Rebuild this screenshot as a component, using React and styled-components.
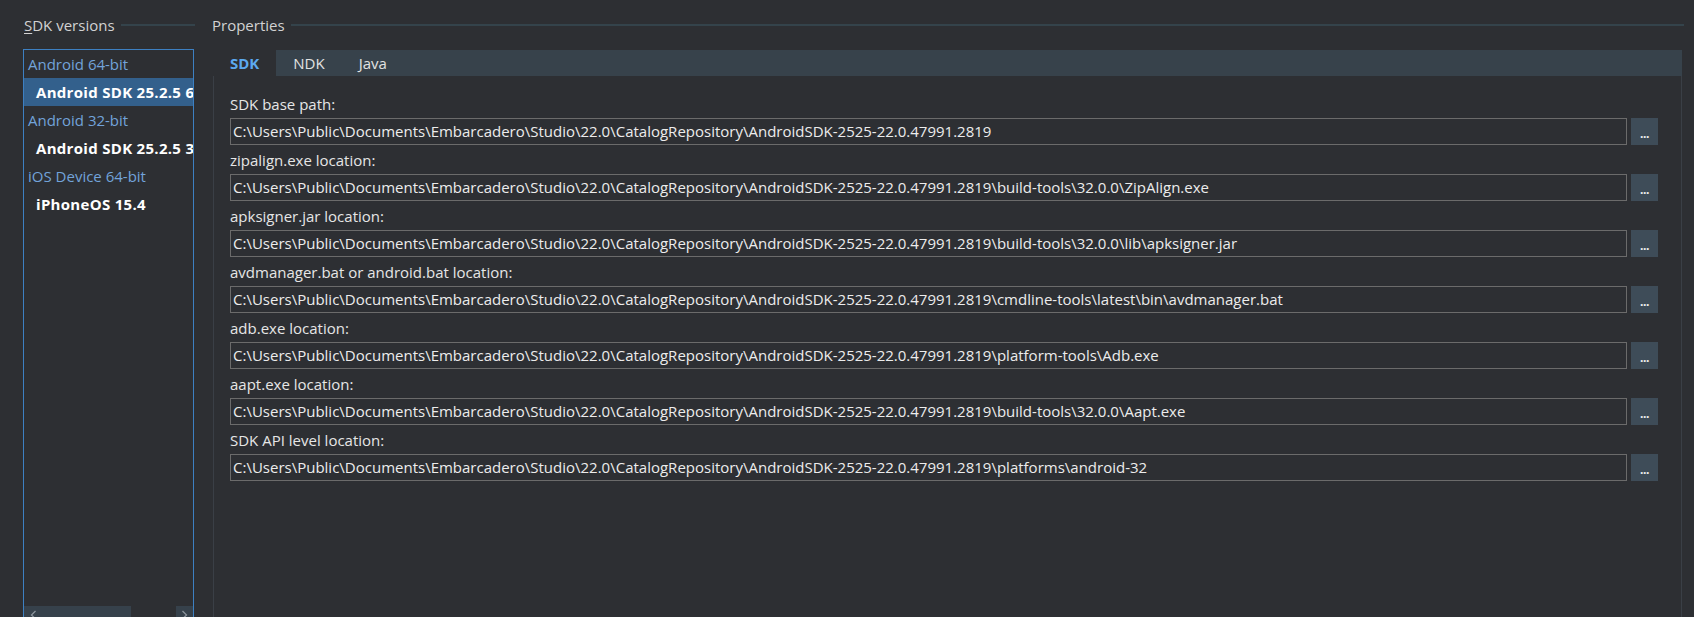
import React, { useState } from 'react'
import styled, { createGlobalStyle } from 'styled-components'

const Global = createGlobalStyle`
  html, body { margin: 0; height: 100%; overflow: hidden; }
  body {
    background: #2d2f33;
    color: #e6e6e6;
    font: 15px "Open Sans", "Noto Sans", sans-serif;
  }
`

const sdkPath = 'C:\\Users\\Public\\Documents\\Embarcadero\\Studio\\22.0\\CatalogRepository\\AndroidSDK-2525-22.0.47991.2819'

const versions = [
  { group: 'Android 64-bit', items: ['Android SDK 25.2.5 64-bit'] },
  { group: 'Android 32-bit', items: ['Android SDK 25.2.5 32-bit'] },
  { group: 'iOS Device 64-bit', items: ['iPhoneOS 15.4'] },
]

const fields = [
  { label: 'SDK base path:', value: sdkPath },
  { label: 'zipalign.exe location:', value: sdkPath + '\\build-tools\\32.0.0\\ZipAlign.exe' },
  { label: 'apksigner.jar location:', value: sdkPath + '\\build-tools\\32.0.0\\lib\\apksigner.jar' },
  { label: 'avdmanager.bat or android.bat location:', value: sdkPath + '\\cmdline-tools\\latest\\bin\\avdmanager.bat' },
  { label: 'adb.exe location:', value: sdkPath + '\\platform-tools\\Adb.exe' },
  { label: 'aapt.exe location:', value: sdkPath + '\\build-tools\\32.0.0\\Aapt.exe' },
  { label: 'SDK API level location:', value: sdkPath + '\\platforms\\android-32' },
]

const tabs = ['SDK', 'NDK', 'Java']

const Page = styled.div`
  display: flex;
  gap: 17px;
  height: 624px;
  box-sizing: border-box;
  padding: 13px 10px 0 23px;
`

const Column = styled.div`
  display: flex;
  flex-direction: column;
  width: ${(p) => (p.$width ? `${p.$width}px` : 'auto')};
  flex: ${(p) => (p.$width ? 'none' : '1')};
  min-width: 0;
`

const GroupTitle = styled.div`
  display: flex;
  align-items: center;
  gap: 6px;
  height: 24px;
  color: #d2d2d2;
  white-space: nowrap;
  padding-left: ${(p) => p.$indent || 0}px;

  u { text-decoration-thickness: 1px; text-underline-offset: 2px; }
`

const TitleLine = styled.div`
  flex: 1;
  height: 2px;
  background: #34434b;
`

const VersionList = styled.div`
  display: flex;
  flex-direction: column;
  width: 171px;
  flex: 1;
  margin-top: 12px;
  box-sizing: border-box;
  border: 1px solid #3d80c2;
  overflow: hidden;
`

const ListRows = styled.div`
  flex: 1;
  overflow: hidden;
`

const ListRow = styled.div`
  height: 28px;
  line-height: 28px;
  white-space: nowrap;
  overflow: hidden;
  padding-left: ${(p) => (p.$group ? 4 : 12)}px;
  color: ${(p) => (p.$group ? '#72a3da' : '#ffffff')};
  font-weight: ${(p) => (p.$group ? 400 : 700)};
  letter-spacing: ${(p) => (p.$group ? 0 : 0.3)}px;
  background: ${(p) => (p.$selected ? '#33608c' : 'transparent')};
`

const HScroll = styled.div`
  display: flex;
  height: 17px;
  flex: none;
`

const ScrollPart = styled.div`
  display: flex;
  align-items: center;
  justify-content: ${(p) => (p.$end ? 'center' : 'flex-start')};
  width: ${(p) => p.$width}px;
  padding-left: ${(p) => (p.$end ? 0 : 6)}px;
  box-sizing: border-box;
  background: #36414b;
  margin-left: ${(p) => (p.$push ? 'auto' : '0')};
`

const Panel = styled.div`
  display: flex;
  flex-direction: column;
  flex: 1;
  margin: 13px 2px 0 1px;
`

const TabBar = styled.div`
  display: flex;
  height: 26px;
  background: #37424b;
  flex: none;
`

const Tab = styled.div`
  padding: 0 17px;
  line-height: 26px;
  background: ${(p) => (p.$active ? '#2d2f33' : 'transparent')};
  color: ${(p) => (p.$active ? '#5ca9ef' : '#e2e2e2')};
  font-weight: ${(p) => (p.$active ? 700 : 400)};
  cursor: default;
`

const PanelBody = styled.div`
  flex: 1;
  border-left: 1px solid #3a3f46;
  border-right: 1px solid #3a3f46;
  padding: 13px 23px 0 16px;
`

const FieldLabel = styled.div`
  height: 29px;
  line-height: 30px;
  color: #e6e6e6;
  white-space: nowrap;
`

const InputRow = styled.div`
  display: flex;
  gap: 4px;
  height: 27px;
`

const PathBox = styled.div`
  flex: 1;
  min-width: 0;
  box-sizing: border-box;
  border: 1px solid #6b6b6b;
  padding: 0 2px;
  line-height: 25px;
  white-space: nowrap;
  overflow: hidden;
  color: #ececec;
`

const BrowseButton = styled.div`
  display: flex;
  align-items: flex-end;
  justify-content: center;
  width: 27px;
  height: 27px;
  box-sizing: border-box;
  padding-bottom: 6px;
  background: #3e4c58;
  color: #f0f0f0;
  font-size: 12px;
  font-weight: 700;
  line-height: 10px;
  letter-spacing: -0.5px;
`

const Chevron = ({ dir }) => (
  <svg width="7" height="10" viewBox="0 0 7 10">
    <path
      d={dir === 'left' ? 'M5.5 1 L1.5 5 L5.5 9' : 'M1.5 1 L5.5 5 L1.5 9'}
      fill="none"
      stroke="#8b939b"
      strokeWidth="1.3"
    />
  </svg>
)

export default function App() {
  const [activeTab, setActiveTab] = useState('SDK')
  const [selected, setSelected] = useState('Android SDK 25.2.5 64-bit')

  return (
    <Page>
      <Global />
      <Column $width={172}>
        <GroupTitle $indent={1}>
          <span>
            <u>S</u>DK versions
          </span>
          <TitleLine />
        </GroupTitle>
        <VersionList>
          <ListRows>
            {versions.map((v) => (
              <React.Fragment key={v.group}>
                <ListRow $group>{v.group}</ListRow>
                {v.items.map((item) => (
                  <ListRow key={item} $selected={item === selected} onClick={() => setSelected(item)}>
                    {item}
                  </ListRow>
                ))}
              </React.Fragment>
            ))}
          </ListRows>
          <HScroll>
            <ScrollPart $width={107}>
              <Chevron dir="left" />
            </ScrollPart>
            <ScrollPart $width={17} $end $push>
              <Chevron dir="right" />
            </ScrollPart>
          </HScroll>
        </VersionList>
      </Column>

      <Column>
        <GroupTitle>
          <span>Properties</span>
          <TitleLine />
        </GroupTitle>
        <Panel>
          <TabBar>
            {tabs.map((t) => (
              <Tab key={t} $active={t === activeTab} onClick={() => setActiveTab(t)}>
                {t}
              </Tab>
            ))}
          </TabBar>
          <PanelBody>
            {fields.map((f) => (
              <div key={f.label}>
                <FieldLabel>{f.label}</FieldLabel>
                <InputRow>
                  <PathBox>{f.value}</PathBox>
                  <BrowseButton>...</BrowseButton>
                </InputRow>
              </div>
            ))}
          </PanelBody>
        </Panel>
      </Column>
    </Page>
  )
}
